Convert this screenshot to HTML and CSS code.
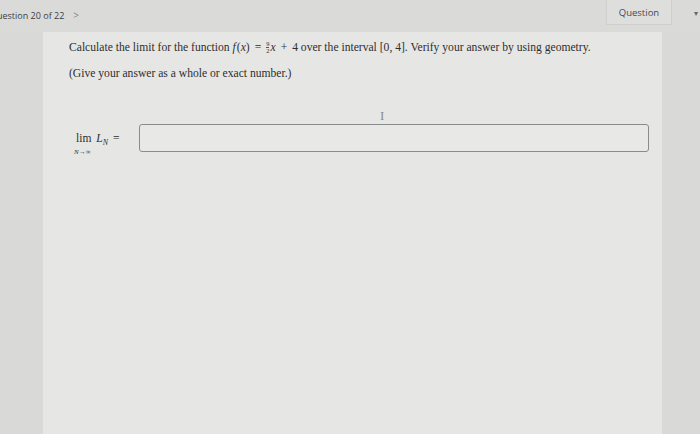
FILE: index.html
```html
<!DOCTYPE html>
<html>
<head>
<meta charset="utf-8">
<link rel="stylesheet" href="styles.css">
</head>
<body>
<div class="topbar">
  <div class="nav">
    <span class="qnum">Question 20 of 22</span>
    <span class="chev">&gt;</span>
  </div>
  <div class="right">
    <div class="qbtn">Question</div>
    <span class="caret">&#9662;</span>
  </div>
</div>
<div class="main">
  <div class="panel">
    <p class="line1">Calculate the limit for the function <span class="math"><i>f</i>&#8202;(<i>x</i>)<span class="op">=</span><span class="frac"><span class="num">9</span><span class="den">2</span></span><i>x</i><span class="op">+</span>4</span> over the interval [0, 4]. Verify your answer by using geometry.</p>
    <p class="line2">(Give your answer as a whole or exact number.)</p>
    <div class="answer">
      <div class="lim">
        <div class="limtop"><span class="limword">lim</span><span class="ln"><i>L</i><sub><i>N</i></sub></span><span class="op">=</span></div>
        <div class="limsub"><i>N</i>&#8594;&#8734;</div>
      </div>
      <div class="inputbox"></div>
      <span class="cursor">I</span>
    </div>
  </div>
</div>
</body>
</html>
```
FILE: styles.css
```css
html, body {
  margin: 0;
  padding: 0;
}
body {
  width: 700px;
  height: 434px;
  overflow: hidden;
  background: #d9dad8;
  font-family: "Open Sans", "Liberation Sans", sans-serif;
  color: #333;
}
.topbar {
  height: 32px;
  display: flex;
  justify-content: space-between;
  align-items: flex-start;
  background: #dadbd9;
}
.nav {
  display: flex;
  align-items: center;
  height: 30px;
  margin-left: -10px;
  font-size: 9px;
  color: #3a3d44;
}
.chev {
  margin-left: 9px;
  color: #888;
  font-size: 10px;
}
.right {
  display: flex;
  align-items: flex-start;
}
.qbtn {
  width: 66px;
  height: 25px;
  border: 1px solid #cfd0ce;
  border-top: none;
  background: #dedfdd;
  font-size: 9.5px;
  color: #444a55;
  display: flex;
  align-items: center;
  justify-content: center;
  box-sizing: border-box;
  margin-right: 22px;
}
.caret {
  font-size: 8px;
  color: #666;
  margin-top: 7px;
  margin-right: 2px;
}
.main {
  display: flex;
  height: 402px;
}
.panel {
  position: relative;
  margin-left: 43px;
  width: 619px;
  background: #e6e7e5;
  padding-left: 26px;
  padding-top: 9px;
  box-sizing: border-box;
  font-family: "Liberation Serif", "Times New Roman", serif;
  font-size: 11.6px;
  color: #2e2e2e;
}
.panel p {
  margin: 0;
}
.line1 {
  line-height: 14px;
}
.line2 {
  margin-top: 12px !important;
  line-height: 14px;
}
.math .op {
  margin: 0 5px;
}
.frac {
  display: inline-flex;
  flex-direction: column;
  vertical-align: middle;
  font-size: 6.5px;
  line-height: 6px;
  text-align: center;
  margin: 0 1px 0 0;
  position: relative;
  top: -1px;
}
.den {
  border-top: 0.5px solid #555;
}
.answer {
  display: flex;
  align-items: flex-start;
  margin-top: 43px;
}
.lim {
  width: 70px;
  padding-left: 7px;
  padding-top: 8px;
  box-sizing: border-box;
  font-size: 11.5px;
}
.limtop {
  line-height: 13px;
  white-space: nowrap;
}
.ln {
  margin-left: 5px;
}
.limtop sub {
  font-size: 8px;
}
.limtop .op {
  margin-left: 5px;
}
.limsub {
  font-size: 7px;
  line-height: 7px;
  margin-left: -2px;
}
.inputbox {
  width: 510px;
  height: 28px;
  border: 1.5px solid #8a8b8d;
  border-radius: 3px;
  box-sizing: border-box;
  background: #e8e9e7;
}
.cursor {
  position: absolute;
  left: 337px;
  top: 76px;
  font-size: 13px;
  color: #8a8a8a;
}
```
